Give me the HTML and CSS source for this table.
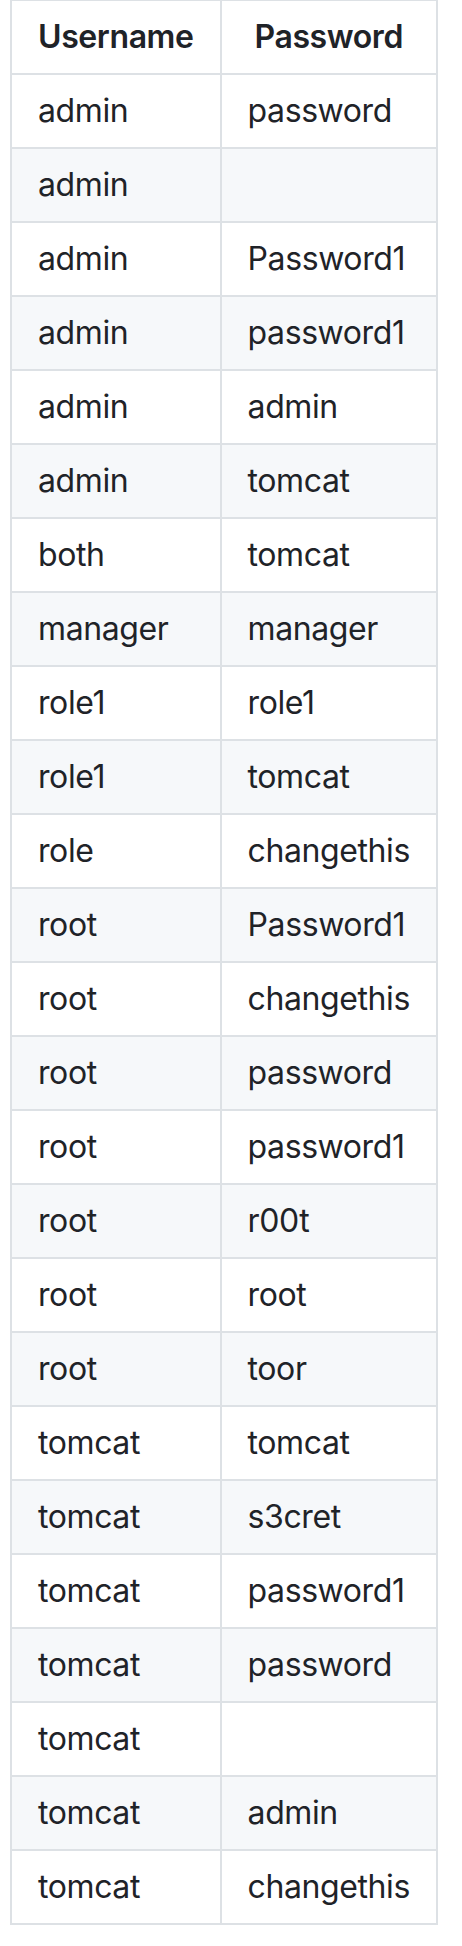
FILE: index.html
```html
<!DOCTYPE html>
<html>
<head>
<meta charset="utf-8">
<link rel="stylesheet" href="styles.css">
</head>
<body>
<div class="wrap">
<table class="creds">
<thead><tr><th>Username</th><th>Password</th></tr></thead>
<tbody>
<tr><td>admin</td><td>password</td></tr>
<tr><td>admin</td><td></td></tr>
<tr><td>admin</td><td>Password1</td></tr>
<tr><td>admin</td><td>password1</td></tr>
<tr><td>admin</td><td>admin</td></tr>
<tr><td>admin</td><td>tomcat</td></tr>
<tr><td>both</td><td>tomcat</td></tr>
<tr><td>manager</td><td>manager</td></tr>
<tr><td>role1</td><td>role1</td></tr>
<tr><td>role1</td><td>tomcat</td></tr>
<tr><td>role</td><td>changethis</td></tr>
<tr><td>root</td><td>Password1</td></tr>
<tr><td>root</td><td>changethis</td></tr>
<tr><td>root</td><td>password</td></tr>
<tr><td>root</td><td>password1</td></tr>
<tr><td>root</td><td>r00t</td></tr>
<tr><td>root</td><td>root</td></tr>
<tr><td>root</td><td>toor</td></tr>
<tr><td>tomcat</td><td>tomcat</td></tr>
<tr><td>tomcat</td><td>s3cret</td></tr>
<tr><td>tomcat</td><td>password1</td></tr>
<tr><td>tomcat</td><td>password</td></tr>
<tr><td>tomcat</td><td></td></tr>
<tr><td>tomcat</td><td>admin</td></tr>
<tr><td>tomcat</td><td>changethis</td></tr>
</tbody>
</table>
</div>
</body>
</html>
```
FILE: styles.css
```css
html, body {
  margin: 0;
  padding: 0;
  background: #ffffff;
}
.wrap {
  padding: 0 10px;
  margin-top: -1px;
}
.creds {
  border-collapse: collapse;
  border-spacing: 0;
  font-family: Inter, "Noto Sans", "Liberation Sans", sans-serif;
  font-size: 32px;
  line-height: 48px;
  letter-spacing: -0.4px;
  color: #1f2328;
}
.creds th,
.creds td {
  border: 2px solid #dde1e5;
  padding: 12px 26px;
  height: 48px;
}
.creds th {
  font-weight: 600;
  text-align: center;
}
.creds td {
  text-align: left;
  font-weight: 400;
}
.creds tbody tr {
  background: #ffffff;
}
.creds tbody tr:nth-child(even) {
  background: #f6f8fa;
}
```
